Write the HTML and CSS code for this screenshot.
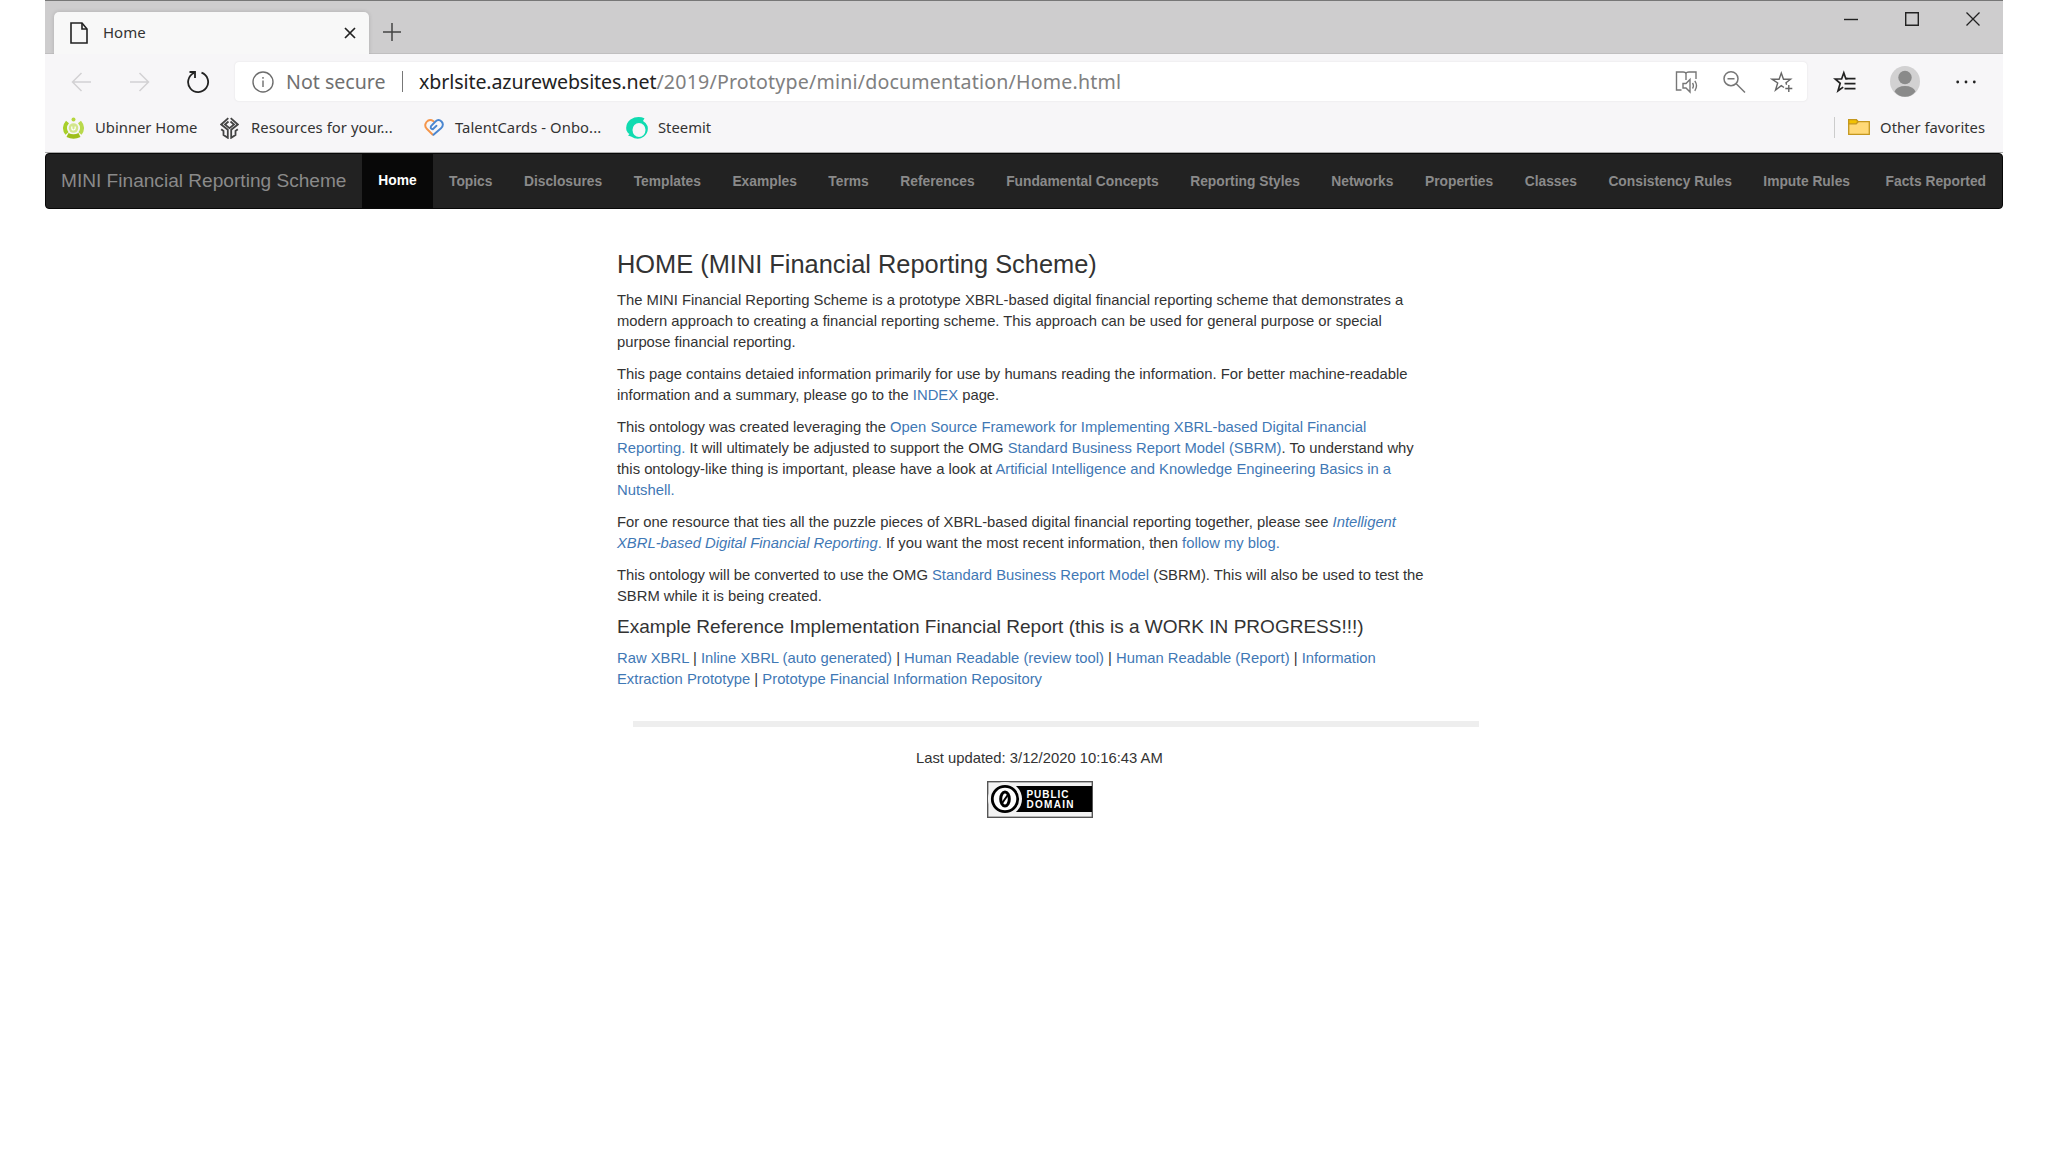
FILE: index.html
```html
<!DOCTYPE html>
<html lang="en">
<head>
    <meta charset="UTF-8">
    <title>Home</title>
    <link rel="stylesheet" href="styles.css">
</head>
<body>

<div class="browser">

    <!-- Tab strip -->
    <div class="tab-strip">
        <div class="tab">
            <svg class="page-icon" width="18" height="22" viewBox="0 0 18 22" fill="none" stroke="#222" stroke-width="1.6"><path d="M1 1h11l5 6v14H1z"/><path d="M12 1v6h5"/></svg>
            <span class="tab-title">Home</span>
            <svg width="12" height="12" viewBox="0 0 12 12" stroke="#222" stroke-width="1.7"><path d="M1 1l10 10M11 1L1 11"/></svg>
        </div>
        <svg class="new-tab" width="18" height="18" viewBox="0 0 18 18" stroke="#444" stroke-width="1.5"><path d="M9 0v18M0 9h18"/></svg>
        <div class="window-buttons">
            <svg width="14" height="14" viewBox="0 0 14 14" stroke="#222" stroke-width="1.4"><path d="M0 7.500h14"/></svg>
            <svg width="14" height="14" viewBox="0 0 14 14" fill="none" stroke="#222" stroke-width="1.4"><path d="M.7.7h12.6v12.6H.7z"/></svg>
            <svg width="14" height="14" viewBox="0 0 14 14" stroke="#222" stroke-width="1.3"><path d="M.5.5l13 13M13.500.5l-13 13"/></svg>
        </div>
    </div>

    <!-- Address bar -->
    <div class="toolbar">
        <svg class="back" width="21" height="20" viewBox="0 0 21 20" fill="none" stroke="#d2d1d3" stroke-width="1.5"><path d="M20 10H1.500M10.500 1l-9 9 9 9"/></svg>
        <svg class="forward" width="21" height="20" viewBox="0 0 21 20" fill="none" stroke="#d2d1d3" stroke-width="1.5"><path d="M1 10h18.500M10.500 1l9 9-9 9"/></svg>
        <svg class="reload" width="24" height="24" viewBox="0 0 24 24" fill="none" stroke="#222" stroke-width="1.8"><path d="M15.500 2.700a10 10 0 1 1-7.500.3"/><path d="M3.500 2h5.500v6"/></svg>
        <div class="address">
            <svg width="22" height="22" viewBox="0 0 22 22" fill="none" stroke="#6d6d6d" stroke-width="1.4"><circle cx="11" cy="11" r="10"/><path d="M11 9.500V16M11 6v1.800"/></svg>
            <span class="security">Not secure</span>
            <span class="url"><span class="domain">xbrlsite.azurewebsites.net</span>/2019/Prototype/mini/documentation/Home.html</span>
            <div class="address-icons">
                <svg width="24" height="24" viewBox="0 0 24 24" fill="none" stroke="#777" stroke-width="1.4"><path d="M7.500 20H2.500V2H9q3 0 3 2v6M12 4q0-2 3-2h7v7"/><path d="M9 13.500h3L16 9.500v12.500l-4-4H9zM18.500 13q1.800 2.700 0 5.500M20.800 10.800q3.400 5 0 10"/></svg>
                <svg width="24" height="24" viewBox="0 0 24 24" fill="none" stroke="#777" stroke-width="1.5"><circle cx="9" cy="8.700" r="7"/><path d="M14 13.500l9 9M5.500 8.700h7"/></svg>
                <svg width="24" height="24" viewBox="0 0 24 24" fill="none" stroke="#666" stroke-width="1.4"><path d="M14 17.500l-2.700-1.900L5.500 20l2.200-7L2 9.200h7.100L11.300 3l2.200 6.200h7.100L16 12.800l.6 2"/><path d="M18.800 15v7M15.300 18.500h7"/></svg>
            </div>
        </div>
        <svg class="favorites" width="24" height="24" viewBox="0 0 24 24" fill="none" stroke="#222" stroke-width="1.7"><path d="M14.500 8.700h-1.700L10.800 2.800 8.600 9H2.200l5 4.300L5 20.800l5.200-3.700"/><path d="M12.500 8.700h10M11.500 13.700h11M11.500 18.700h11"/></svg>
        <svg class="avatar" width="30" height="31" viewBox="0 0 30 31"><ellipse cx="15" cy="15.500" rx="15" ry="15.500" fill="#d2d1d2"/><circle cx="15" cy="11.500" r="6.700" fill="#8a8a8a"/><path d="M4.500 25.500Q7 20 15 20t10.500 5.500Q21.500 30.800 15 30.800T4.500 25.500z" fill="#8a8a8a"/></svg>
        <svg class="more" width="20" height="4" viewBox="0 0 20 4" fill="#222"><circle cx="1.700" cy="2" r="1.400"/><circle cx="10" cy="2" r="1.400"/><circle cx="18.300" cy="2" r="1.400"/></svg>
    </div>

    <!-- Favorites bar -->
    <div class="bookmarks">
        <a class="bookmark ubinner">
            <svg width="21" height="22" viewBox="0 0 21 22" fill="none"><path d="M4.500 5Q1.800 8 2 11.500q0 2.500 2 5" stroke="#a8cf2a" stroke-width="4"/><path d="M16.500 5q2.700 3 2.500 6.500 0 2.500-2 5" stroke="#b9d94c" stroke-width="4"/><path d="M4.500 18q6 3 12 0" stroke="#9ebf1b" stroke-width="4.500"/><circle cx="10.500" cy="2.500" r="2" fill="#b5d63d"/><circle cx="10.500" cy="11" r="4.800" fill="#d3e68c"/><path d="M8.800 9.500v1.500q0 2 1.700 2t1.700-2V9.500" stroke="#fff" stroke-width="1.200"/></svg>
            <span>Ubinner Home</span>
        </a>
        <a class="bookmark resources">
            <svg width="19" height="22" viewBox="0 0 19 22" fill="none" stroke="#444" stroke-width="1.800"><path d="M8.300 1.200L1.200 7.500l6.600 5.300v8L3.500 18v-4L1.200 12.200M10.700 1.200l7.100 6.300-6.600 5.300v8l4.300-2.800v-4l2.300-1.800"/><path d="M8.500 4.500L5 7.500l4.500 3.700L14 7.500l-3.500-3"/></svg>
            <span>Resources for your...</span>
        </a>
        <a class="bookmark talent">
            <svg width="20" height="17" viewBox="0 0 20 17" fill="none" stroke-width="1.900" stroke-linejoin="round" stroke-linecap="round"><path d="M9.500 2.300Q5.500-.5 2.500 3 0 6.500 2.500 9.500l6 6" stroke="#f5954a"/><path d="M9.500 15.800L17.300 9Q20.300 5.500 17.500 2.500 14.500-.3 11.500 2.500L7 7.200Q6 10 8.800 10.200L12.500 6.800" stroke="#4a86d0"/></svg>
            <span>TalentCards - Onbo...</span>
        </a>
        <a class="bookmark steemit">
            <svg width="22" height="22" viewBox="0 0 22 22"><path d="M18.500 1.200Q11-1.500 4.500 2.500-1 7 .5 13.500q1 2.500 3 3.500l-1.500 1.500 3 1Q12 24 18 19.500 23 15 21.500 9 20.500 6 17 4z" fill="#10dbb0"/><ellipse cx="13" cy="13" rx="6.500" ry="7" fill="#f7f6f8"/></svg>
            <span>Steemit</span>
        </a>
        <a class="bookmark other">
            <svg width="22" height="16" viewBox="0 0 22 16" stroke="#c4971f" stroke-width="1.300"><path d="M.7 15.300V.7h7.500l2 2h11.100v12.600z" fill="#ffd978"/><path d="M.7 4.800h7.500l2-2L8.200.7H.7z" fill="#f2c200"/></svg>
            <span>Other favorites</span>
        </a>
    </div>

    <!-- Site navigation -->
    <nav class="navbar">
        <a class="brand">MINI Financial Reporting Scheme</a>
        <a class="active">Home</a>
        <div class="nav-links">
            <a>Topics</a>
            <a>Disclosures</a>
            <a>Templates</a>
            <a>Examples</a>
            <a>Terms</a>
            <a>References</a>
            <a>Fundamental Concepts</a>
            <a>Reporting Styles</a>
            <a>Networks</a>
            <a>Properties</a>
            <a>Classes</a>
            <a>Consistency Rules</a>
            <a>Impute Rules</a>
            <a>Facts Reported</a>
        </div>
    </nav>

    <main class="content">
        <h3>HOME (MINI Financial Reporting Scheme)</h3>
        <p>The MINI Financial Reporting Scheme is a prototype XBRL-based digital financial reporting scheme that demonstrates a<br>
            modern approach to creating a financial reporting scheme. This approach can be used for general purpose or special<br>
            purpose financial reporting.</p>
        <p>This page contains detaied information primarily for use by humans reading the information. For better machine-readable<br>
            information and a summary, please go to the <a href="#">INDEX</a> page.</p>
        <p>This ontology was created leveraging the <a href="#">Open Source Framework for Implementing XBRL-based Digital Financial<br>
            Reporting.</a> It will ultimately be adjusted to support the OMG <a href="#">Standard Business Report Model (SBRM)</a>. To understand why<br>
            this ontology-like thing is important, please have a look at <a href="#">Artificial Intelligence and Knowledge Engineering Basics in a<br>
            Nutshell.</a></p>
        <p>For one resource that ties all the puzzle pieces of XBRL-based digital financial reporting together, please see <a href="#"><em>Intelligent<br>
            XBRL-based Digital Financial Reporting</em>.</a> If you want the most recent information, then <a href="#">follow my blog.</a></p>
        <p>This ontology will be converted to use the OMG <a href="#">Standard Business Report Model</a> (SBRM). This will also be used to test the<br>
            SBRM while it is being created.</p>
        <h4>Example Reference Implementation Financial Report (this is a WORK IN PROGRESS!!!)</h4>
        <p><a href="#">Raw XBRL</a> | <a href="#">Inline XBRL (auto generated)</a> | <a href="#">Human Readable (review tool)</a> | <a href="#">Human Readable (Report)</a> | <a href="#">Information<br>
            Extraction Prototype</a> | <a href="#">Prototype Financial Information Repository</a></p>
    </main>

    <footer class="footer">
        <p>Last updated: 3/12/2020 10:16:43 AM</p>
        <svg class="badge" width="106" height="37" viewBox="0 0 106 37">
            <rect x=".7" y=".7" width="104.600" height="35.600" fill="#f3f3f3" stroke="#555" stroke-width="1.400"/>
            <path d="M28 5h77v26H28z" fill="#000"/>
            <circle cx="18" cy="18" r="17" fill="#f3f3f3"/>
            <circle cx="18" cy="18" r="12.700" fill="#fff" stroke="#000" stroke-width="2.800"/>
            <ellipse cx="18" cy="18" rx="4.300" ry="7" fill="none" stroke="#000" stroke-width="3"/>
            <path d="M14.500 23l7-10" stroke="#000" stroke-width="2"/>
            <text x="39.500" y="17" textLength="42" class="badge-text">PUBLIC</text>
            <text x="39.500" y="27" textLength="47" class="badge-text">DOMAIN</text>
        </svg>
    </footer>

</div>

</body>
</html>
```
FILE: styles.css
```css
body {
  margin: 0;
  background: #fff;
  color: #333;
  font-family: "Liberation Sans", Arial, sans-serif;
  font-size: 14.8px;
  line-height: 21.17px;
}

svg {
  display: block;
  flex: none;
}

a {
  color: #3f78b5;
  text-decoration: none;
}

.browser {
  width: 1958px;
  margin-left: 45px;
}

/* Tab strip */
.tab-strip {
  display: flex;
  align-items: flex-start;
  box-sizing: border-box;
  height: 54px;
  background: #cecdce;
  border-top: 1px solid #777;
  box-shadow: inset 0 -1px #c0bfc0;
}

.tab {
  display: flex;
  align-items: center;
  box-sizing: border-box;
  width: 315px;
  height: 42px;
  margin: 11px 0 0 9px;
  padding: 0 13px 0 16px;
  background: #f8f8f8;
  border-radius: 5px 5px 0 0;
  box-shadow: 0 0 4px rgba(0, 0, 0, 0.15);
  clip-path: inset(-5px -5px 0 -5px);
}

.tab-title {
  flex: 1;
  margin-left: 15px;
  color: #333;
  font-family: "Noto Sans", sans-serif;
  font-size: 15px;
}

.new-tab {
  margin: 22px 0 0 14px;
}

.window-buttons {
  display: flex;
  gap: 47px;
  margin: 11px 23px 0 auto;
}

/* Address bar */
.toolbar {
  display: flex;
  align-items: center;
  height: 55px;
  background: #f7f6f8;
}

.back {
  margin-left: 26px;
}

.forward {
  margin-left: 37px;
}

.reload {
  margin-left: 36px;
}

.address {
  display: flex;
  align-items: center;
  box-sizing: border-box;
  width: 1572px;
  height: 39px;
  margin-left: 25px;
  padding: 0 13px 0 17px;
  background: #fff;
  border-radius: 4px;
  box-shadow: 0 0 2px rgba(0, 0, 0, 0.1);
  font-family: "Noto Sans", sans-serif;
  font-size: 19.6px;
}

.security {
  width: 116px;
  margin-left: 12px;
  color: #707070;
  border-right: 1px solid #777;
}

.url {
  margin-left: 16px;
  padding-top: 1px;
  color: #808080;
  letter-spacing: 0.18px;
}

.domain {
  color: #222;
  letter-spacing: -0.1px;
}

.address-icons {
  display: flex;
  gap: 24px;
  margin-left: auto;
}

.favorites {
  margin-left: 26px;
}

.avatar {
  margin-left: 33px;
}

.more {
  margin-left: 36px;
}

/* Favorites bar */
.bookmarks {
  display: flex;
  align-items: center;
  box-sizing: border-box;
  height: 44px;
  padding: 0 18px 6px;
  background: #f7f6f8;
  border-bottom: 1px solid #aaa;
}

.bookmark {
  display: flex;
  align-items: center;
  color: #333;
  font-family: "Noto Sans", sans-serif;
  font-size: 14.8px;
}

.ubinner {
  width: 157px;
  gap: 11px;
}

.resources {
  width: 204px;
  gap: 12px;
}

.talent {
  width: 202px;
  gap: 11px;
}

.resources,
.talent {
  letter-spacing: 0.07px;
}

.steemit {
  gap: 10px;
}

.other {
  gap: 10px;
  margin-left: auto;
  padding-left: 13px;
  border-left: 1px solid #ccc;
}

/* Site navigation */
.navbar {
  display: flex;
  align-items: center;
  box-sizing: border-box;
  height: 56px;
  padding: 0 16px 0 15px;
  background: #222;
  border: 1px solid #080808;
  border-radius: 4px;
  font-size: 13.8px;
  font-weight: bold;
}

.navbar a {
  color: #8a8a8a;
}

.navbar .brand {
  width: 301px;
  font-size: 19.1px;
  font-weight: normal;
}

.navbar .active {
  width: 71px;
  background: #080808;
  color: #fff;
  line-height: 54px;
  text-align: center;
}

.nav-links {
  display: flex;
  flex: 1;
  gap: 31.5px;
  margin-left: 16px;
  padding-top: 1px;
  white-space: nowrap;
}

.nav-links a:last-child {
  margin-left: auto;
}

/* Page text */
.content {
  padding: 41px 0 0 572px;
}

.content h3,
.content h4 {
  margin: 0;
  font-weight: normal;
}

.content h3 {
  margin-bottom: 11.5px;
  font-size: 25.4px;
  line-height: 28px;
}

.content h4 {
  margin: -1px 0 11px;
  font-size: 19.05px;
  line-height: 20px;
}

.content p {
  margin: 0 0 10.6px;
}

/* Footer */
.footer {
  width: 846px;
  box-sizing: border-box;
  margin: 31px 0 0 588px;
  padding-top: 21px;
  border-top: 6px solid #eee;
}

.footer p {
  margin: 0 0 12px 283px;
}

.badge {
  margin-left: 354px;
}

.badge-text {
  fill: #fff;
  font-size: 10px;
  font-weight: bold;
}
```
